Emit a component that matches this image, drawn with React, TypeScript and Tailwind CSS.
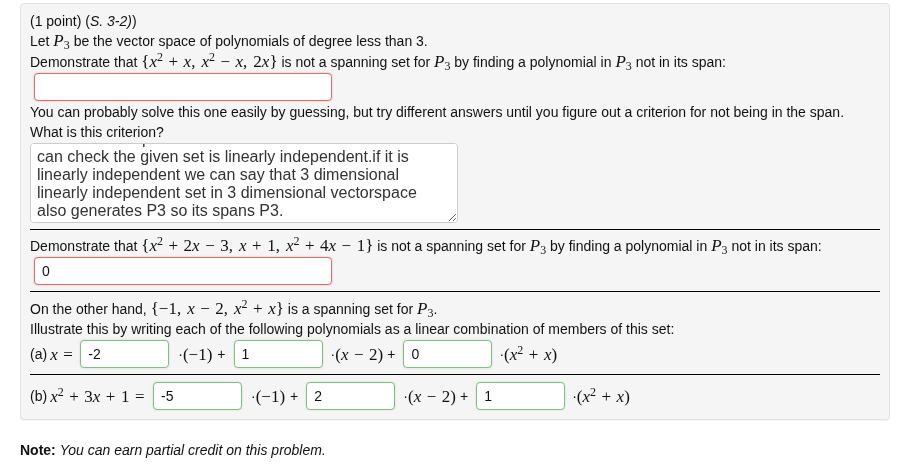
import { useEffect, useRef } from 'react';

const serif = "font-['Liberation_Serif',serif] text-[17px] leading-[1]";

function M({ children }: { children: React.ReactNode }) {
  return <span className={serif}>{children}</span>;
}

function Op({ c }: { c: string }) {
  return <span className="mx-[5.5px]">{c}</span>;
}

function Cm() {
  return <span className="mr-[6px]">,</span>;
}

function X({ v = 'x' }: { v?: string }) {
  return <i>{v}</i>;
}

function Sq() {
  return <sup className="text-[12px]">2</sup>;
}

function P3() {
  return (
    <M>
      <i>P</i>
      <sub className="text-[12px]">3</sub>
    </M>
  );
}

function Field({ value = '', tone, className = '' }: { value?: string; tone: 'red' | 'green'; className?: string }) {
  const border =
    tone === 'red'
      ? 'border-[#d9706e] shadow-[0_0_2px_rgba(217,83,79,0.45)]'
      : 'border-[#86bd86] shadow-[0_0_2px_rgba(92,184,92,0.35)]';
  return (
    <input
      readOnly
      value={value}
      className={`h-[28px] shrink-0 rounded-[4px] border bg-white px-[7px] text-[14px] text-[#111] outline-none ${border} ${className}`}
    />
  );
}

const answer =
  'P3 is a vectorspace of dimension 3 so instead of this we\ncan check the given set is linearly independent.if it is\nlinearly independent we can say that 3 dimensional\nlinearly independent set in 3 dimensional vectorspace\nalso generates P3 so its spans P3.';

function Row({ label, values }: { label: React.ReactNode; values: string[] }) {
  return (
    <div className="flex items-center">
      {label}
      <Field tone="green" value={values[0]} className="w-[89px]" />
      <span className="ml-[9px]">·</span>
      <M>(−1)</M>
      <span className="ml-[5px]">+</span>
      <Field tone="green" value={values[1]} className="ml-[8px] w-[89px]" />
      <span className="ml-[8px]">·</span>
      <M>
        (<X />
        <Op c="−" />
        2)
      </M>
      <span className="ml-[4px]">+</span>
      <Field tone="green" value={values[2]} className="ml-[8px] w-[89px]" />
      <span className="ml-[7px]">·</span>
      <M>
        (<X />
        <Sq />
        <Op c="+" />
        <X />)
      </M>
    </div>
  );
}

export default function App() {
  const ta = useRef<HTMLTextAreaElement>(null);

  useEffect(() => {
    const el = ta.current;
    if (el) el.scrollTop = el.scrollHeight - el.clientHeight - 2;
  }, []);

  return (
    <div className="min-h-[465px] w-[922px] bg-white pt-[3px] font-['Liberation_Sans',Arial,sans-serif] text-[14px] text-[#111]">
      <div className="ml-[20px] w-[870px] rounded-[4px] border border-[#e3e3e3] bg-[#f5f5f5] px-[9px] pb-[9px] pt-[7px] shadow-[0_1px_1px_rgba(0,0,0,0.05)]">
        <div className="leading-[20px]">
          (1 point) (<i>S. 3-2)</i>)
        </div>
        <div className="leading-[21px]">
          Let <P3 /> be the vector space of polynomials of degree less than 3.
        </div>
        <div className="leading-[20px]">
          Demonstrate that{' '}
          <M>
            {'{'}
            <X />
            <Sq />
            <Op c="+" />
            <X />
            <Cm />
            <X />
            <Sq />
            <Op c="−" />
            <X />
            <Cm />
            2<X />
            {'}'}
          </M>{' '}
          is not a spanning set for <P3 /> by finding a polynomial in <P3 /> not in its span:
        </div>
        <Field tone="red" className="ml-[4px] mt-[1px] block w-[298px]" />

        <div className="mt-[1px] leading-[20px]">
          You can probably solve this one easily by guessing, but try different answers until you figure out a criterion
          for not being in the span.
        </div>
        <div className="leading-[20px]">What is this criterion?</div>
        <textarea
          ref={ta}
          readOnly
          value={answer}
          className="mt-[1px] block h-[80px] w-[428px] resize rounded-[4px] border border-[#cccccc] bg-white px-[6px] pb-[4px] pt-[2px] text-[16px] leading-[18px] text-[#333] outline-none"
        />
        <div className="mt-[6px] h-px bg-black" />

        <div className="mt-[6px] leading-[21px]">
          Demonstrate that{' '}
          <M>
            {'{'}
            <X />
            <Sq />
            <Op c="+" />
            2<X />
            <Op c="−" />3
            <Cm />
            <X />
            <Op c="+" />1
            <Cm />
            <X />
            <Sq />
            <Op c="+" />
            4<X />
            <Op c="−" />1{'}'}
          </M>{' '}
          is not a spanning set for <P3 /> by finding a polynomial in <P3 /> not in its span:
        </div>
        <Field tone="red" value="0" className="ml-[4px] block w-[298px]" />
        <div className="mt-[6px] h-px bg-black" />

        <div className="mt-[7px] leading-[20px]">
          On the other hand,{' '}
          <M>
            {'{'}−1
            <Cm />
            <X />
            <Op c="−" />2
            <Cm />
            <X />
            <Sq />
            <Op c="+" />
            <X />
            {'}'}
          </M>{' '}
          is a spanning set for <P3 />.
        </div>
        <div className="leading-[20px]">
          Illustrate this by writing each of the following polynomials as a linear combination of members of this set:
        </div>

        <div className="mt-[1px]">
          <Row
            values={['-2', '1', '0']}
            label={
              <>
                <span>(a)</span>
                <M>
                  <span className="ml-[3px]">
                    <X />
                  </span>
                  <Op c="=" />
                </M>
                <span className="w-[2px]" />
              </>
            }
          />
        </div>
        <div className="mt-[6px] h-px bg-black" />

        <div className="mt-[7px]">
          <Row
            values={['-5', '2', '1']}
            label={
              <>
                <span>(b)</span>
                <M>
                  <span className="ml-[3px]">
                    <X />
                  </span>
                  <Sq />
                  <Op c="+" />
                  3<X />
                  <Op c="+" />1
                  <Op c="=" />
                </M>
                <span className="w-[3px]" />
              </>
            }
          />
        </div>
      </div>

      <div className="ml-[20px] mt-[20px] leading-[20px]">
        <b>Note:</b> <i>You can earn partial credit on this problem.</i>
      </div>
    </div>
  );
}
